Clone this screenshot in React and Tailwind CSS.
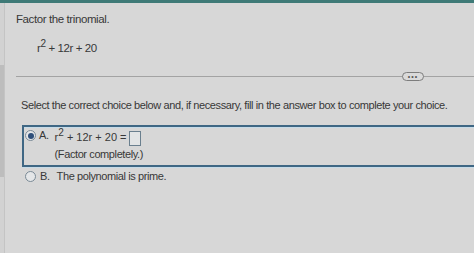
import React from 'react';

function Radio({ checked }) {
  return (
    <span className="flex h-[11px] w-[11px] shrink-0 items-center justify-center rounded-full border border-[#7a8a96] bg-[#e4e6e8]">
      {checked && <span className="h-[6px] w-[6px] rounded-full bg-[#2f4f7a]" />}
    </span>
  );
}

function Sq() {
  return (
    <span>
      r<sup className="-top-[5px] text-[10px]">2</sup>
    </span>
  );
}

export default function App() {
  return (
    <div
      className="flex h-[253px] w-[474px] flex-col overflow-hidden bg-[#d7d7d7] text-[#383838] tracking-[-0.4px]"
      style={{ fontFamily: '"Liberation Sans", Arial, sans-serif' }}
    >
      <div className="h-[3px] shrink-0 bg-[#3f7a77]" />
      <div className="flex flex-1">
        {/* left edge */}
        <div className="flex w-[5px] shrink-0 flex-col border-r border-[#c4c4c4] bg-[#d2d2d2]">
          <div className="h-[62px]" />
          <div className="h-[112px] bg-[#bdbdbd]" />
        </div>

        <div className="flex flex-1 flex-col pl-[11px]">
          <p className="mt-[9px] text-[11.5px] leading-[14px]">Factor the trinomial.</p>
          <p className="mt-[15px] ml-[21px] text-[11.5px] leading-[14px]">
            <Sq /> + 12r + 20
          </p>

          <div className="relative mt-[21px] h-px bg-[#a3a3a3]">
            <span className="absolute left-[386px] -top-[4px] flex h-[9px] w-[22px] items-center justify-center rounded-full border border-[#7d7d7d] bg-[#dadada] text-[7px] leading-none tracking-[1px] text-[#555]">
              •••
            </span>
          </div>

          <p className="mt-[21px] ml-[5px] whitespace-nowrap text-[11px] leading-[14px]">
            Select the correct choice below and, if necessary, fill in the answer box to complete your choice.
          </p>

          <div className="mt-[13px] ml-[6px] flex h-[42px] border-y-2 border-l-2 border-[#3f6784] shadow-[inset_0_1px_0_#c6dbe8,0_1px_0_#c6dbe8]">
            <div className="flex gap-[3px] pl-[1px] pt-[3px]">
              <Radio checked />
              <div className="-mt-[2px] flex gap-[6px] text-[11px] leading-[14px]">
                <span>A.</span>
                <div className="flex flex-col">
                  <div className="flex items-center">
                    <span className="tracking-normal">
                      <Sq /> + 12r + 20 =
                    </span>
                    <span className="ml-[2px] mt-[3px] inline-block h-[15px] w-[12px] border border-[#6a7f8e] bg-[#e2e4e5]" />
                  </div>
                  <span className="mt-[1px]">(Factor completely.)</span>
                </div>
              </div>
            </div>
          </div>

          <div className="mt-[2px] ml-[8px] flex items-center gap-[4px] pl-[1px] text-[11px] leading-[14px]">
            <Radio />
            <span>B.</span>
            <span className="ml-[3px]">The polynomial is prime.</span>
          </div>
        </div>
      </div>
    </div>
  );
}
